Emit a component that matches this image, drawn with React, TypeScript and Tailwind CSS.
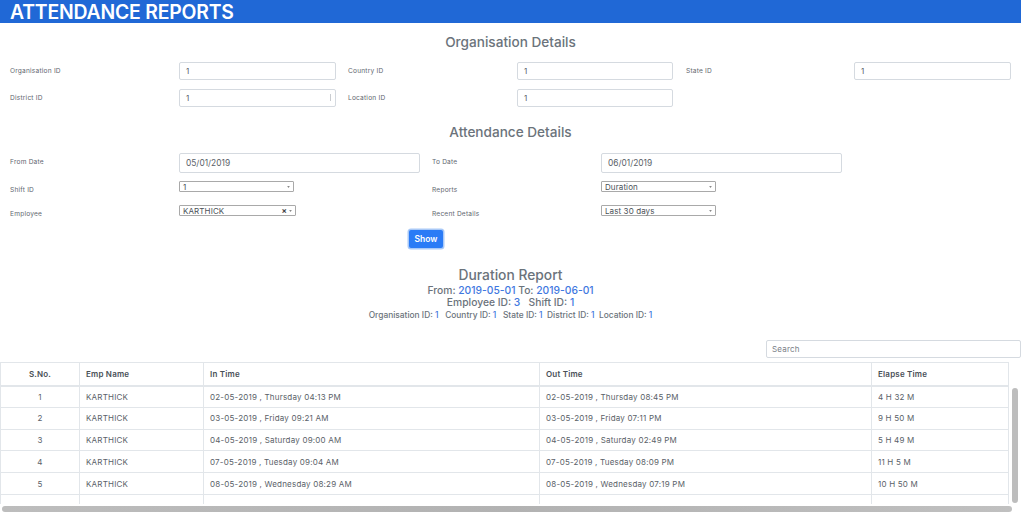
import React from 'react';

const ROWS = [
  ['1', 'KARTHICK', '02-05-2019 , Thursday 04:13 PM', '02-05-2019 , Thursday 08:45 PM', '4 H 32 M'],
  ['2', 'KARTHICK', '03-05-2019 , Friday 09:21 AM', '03-05-2019 , Friday 07:11 PM', '9 H 50 M'],
  ['3', 'KARTHICK', '04-05-2019 , Saturday 09:00 AM', '04-05-2019 , Saturday 02:49 PM', '5 H 49 M'],
  ['4', 'KARTHICK', '07-05-2019 , Tuesday 09:04 AM', '07-05-2019 , Tuesday 08:09 PM', '11 H 5 M'],
  ['5', 'KARTHICK', '08-05-2019 , Wednesday 08:29 AM', '08-05-2019 , Wednesday 07:19 PM', '10 H 50 M'],
  ['', '', '', '', ''],
];

const Label = ({ children }: { children: React.ReactNode }) => (
  <div className="text-[6.6px] leading-[10px] tracking-[0.2px] text-[#5f6770]">{children}</div>
);

const Field = ({ value, className }: { value: string; className: string }) => (
  <div className={`flex items-center rounded-[2px] border border-[#d5dae0] bg-white px-[6px] text-[#5a6168] ${className}`}>
    {value}
  </div>
);

const Select = ({ value, width, clear }: { value: string; width: string; clear?: boolean }) => (
  <div className={`flex h-[11px] items-center justify-between rounded-[1px] border border-[#a9a9a9] bg-white pl-[3px] pr-[3px] text-[8px] leading-[10px] tracking-[0.1px] text-[#4b5157] ${width}`}>
    <span>{value}</span>
    <span className="flex items-center gap-[2px]">
      {clear && <span className="text-[8px] font-bold leading-none text-[#444]">×</span>}
      <svg width="3" height="2" viewBox="0 0 4 3"><path d="M0 0h4L2 3z" fill="#888" /></svg>
    </span>
  </div>
);

const Blue = ({ children }: { children: React.ReactNode }) => (
  <span className="text-[#3f78e0]">{children}</span>
);

export default function App() {
  return (
    <div className="h-[513px] w-[1024px] overflow-hidden bg-white font-['Inter','Liberation_Sans',sans-serif]">
      <div className="flex h-[23px] w-[1021px] items-center bg-[#2068d6] pl-[10px] text-[19.4px] font-semibold leading-[22px] tracking-[-0.2px] text-white">
        ATTENDANCE REPORTS
      </div>

      <h2 className="mt-[10px] h-[18px] w-[1021px] text-center text-[13.6px] font-medium leading-[18px] text-[#6b737b]">
        Organisation Details
      </h2>

      <div className="mt-[11px] grid grid-cols-[169px_169px_169px_169px_168px_169px] gap-y-[9px] pl-[10px] text-[8px]">
        <div className="pt-[4px]"><Label>Organisation ID</Label></div>
        <Field value="1" className="h-[18px] w-[157px]" />
        <div className="pt-[4px]"><Label>Country ID</Label></div>
        <Field value="1" className="h-[18px] w-[156px]" />
        <div className="pt-[4px]"><Label>State ID</Label></div>
        <Field value="1" className="h-[18px] w-[157px]" />
        <div className="pt-[4px]"><Label>District ID</Label></div>
        <div className="relative h-[18px] w-[157px]">
          <Field value="1" className="h-[18px] w-[157px]" />
          <span className="absolute right-[5px] top-[5px] h-[7px] w-px bg-[#c9ccd0]" />
        </div>
        <div className="pt-[4px]"><Label>Location ID</Label></div>
        <Field value="1" className="h-[18px] w-[156px]" />
      </div>

      <h2 className="mt-[16px] h-[18px] w-[1021px] text-center text-[13.6px] font-medium leading-[18px] text-[#6b737b]">
        Attendance Details
      </h2>

      <div className="mt-[12px] grid grid-cols-[169px_253px_169px_253px] pl-[10px] text-[8.4px]">
        <div className="h-[28px] pt-[4px]"><Label>From Date</Label></div>
        <Field value="05/01/2019" className="h-[20px] w-[241px]" />
        <div className="pt-[4px]"><Label>To Date</Label></div>
        <Field value="06/01/2019" className="h-[20px] w-[241px]" />

        <div className="h-[24px] pt-[4px]"><Label>Shift ID</Label></div>
        <Select value="1" width="w-[115px]" />
        <div className="pt-[4px]"><Label>Reports</Label></div>
        <Select value="Duration" width="w-[115px]" />

        <div className="h-[24px] pt-[4px]"><Label>Employee</Label></div>
        <Select value="KARTHICK" width="w-[117px]" clear />
        <div className="pt-[4px]"><Label>Recent Details</Label></div>
        <Select value="Last 30 days" width="w-[115px]" />
      </div>

      <div className="ml-[409px] mt-[1px] flex h-[18px] w-[34px] items-center justify-center rounded-[2px] bg-[#2a7bf6] text-[8.5px] font-semibold text-white shadow-[0_0_0_1.5px_#a9c9f7]">
        Show
      </div>

      <div className="mt-[18px] w-[1021px] text-center text-[#6b737b]">
        <div className="text-[13.8px] font-medium leading-[18px]">Duration Report</div>
        <div className="text-[10.3px] font-medium leading-[13px]">
          From: <Blue>2019-05-01</Blue> To: <Blue>2019-06-01</Blue>
        </div>
        <div className="text-[10.3px] font-medium leading-[11px]">
          Employee ID: <Blue>3</Blue>&nbsp;&nbsp; Shift ID: <Blue>1</Blue>
        </div>
        <div className="mt-[1px] text-[8.4px] font-medium leading-[12px]">
          Organisation ID: <Blue>1</Blue>&nbsp;&nbsp;&nbsp;Country ID: <Blue>1</Blue>&nbsp;&nbsp;&nbsp;State ID: <Blue>1</Blue>&nbsp; District ID: <Blue>1</Blue>&nbsp; Location ID: <Blue>1</Blue>
        </div>
      </div>

      <div className="mt-[19px] flex w-[1021px] justify-end">
        <div className="flex h-[18px] w-[255px] items-center rounded-[2px] border border-[#d5dae0] bg-white pl-[5px] text-[8px] tracking-[0.2px] text-[#7a8087]">
          Search
        </div>
      </div>

      <div className="relative mt-[4px] h-[151px] w-[1024px] overflow-hidden">
        <table className="w-[1008px] table-fixed border-collapse text-[8px] tracking-[0.2px] text-[#5a6168]">
          <colgroup>
            <col className="w-[79px]" />
            <col className="w-[124px]" />
            <col className="w-[336px]" />
            <col className="w-[332px]" />
            <col className="w-[137px]" />
          </colgroup>
          <thead>
            <tr className="h-[23px] border-b-2 border-t border-[#e2e6ea] font-semibold text-[#495057]">
              <th className="border-x border-[#e2e6ea] text-center font-semibold">S.No.</th>
              <th className="border-x border-[#e2e6ea] pl-[6px] text-left font-semibold">Emp Name</th>
              <th className="border-x border-[#e2e6ea] pl-[6px] text-left font-semibold">In Time</th>
              <th className="border-x border-[#e2e6ea] pl-[6px] text-left font-semibold">Out Time</th>
              <th className="border-x border-[#e2e6ea] pl-[6px] text-left font-semibold">Elapse Time</th>
            </tr>
          </thead>
          <tbody>
            {ROWS.map((row, i) => (
              <tr key={i} className="h-[21.8px] border-b border-[#e2e6ea]">
                {row.map((cell, j) => (
                  <td
                    key={j}
                    className={`border-x border-[#e2e6ea] ${j === 0 ? 'text-center' : 'pl-[6px]'}`}
                  >
                    {cell}
                  </td>
                ))}
              </tr>
            ))}
          </tbody>
        </table>
        <div className="absolute bottom-0 left-0 h-[9px] w-[1024px] bg-white" />
        <div className="absolute bottom-[1px] left-[2px] h-[6px] w-[1010px] rounded-[3px] bg-linear-to-r from-[#bdbdbd] via-[#b2b2b2] to-[#c0c0c0]" />
        <div className="absolute right-[6px] top-[26px] h-[115px] w-[6px] rounded-[3px] bg-[#bdbdbd]" />
      </div>
    </div>
  );
}
